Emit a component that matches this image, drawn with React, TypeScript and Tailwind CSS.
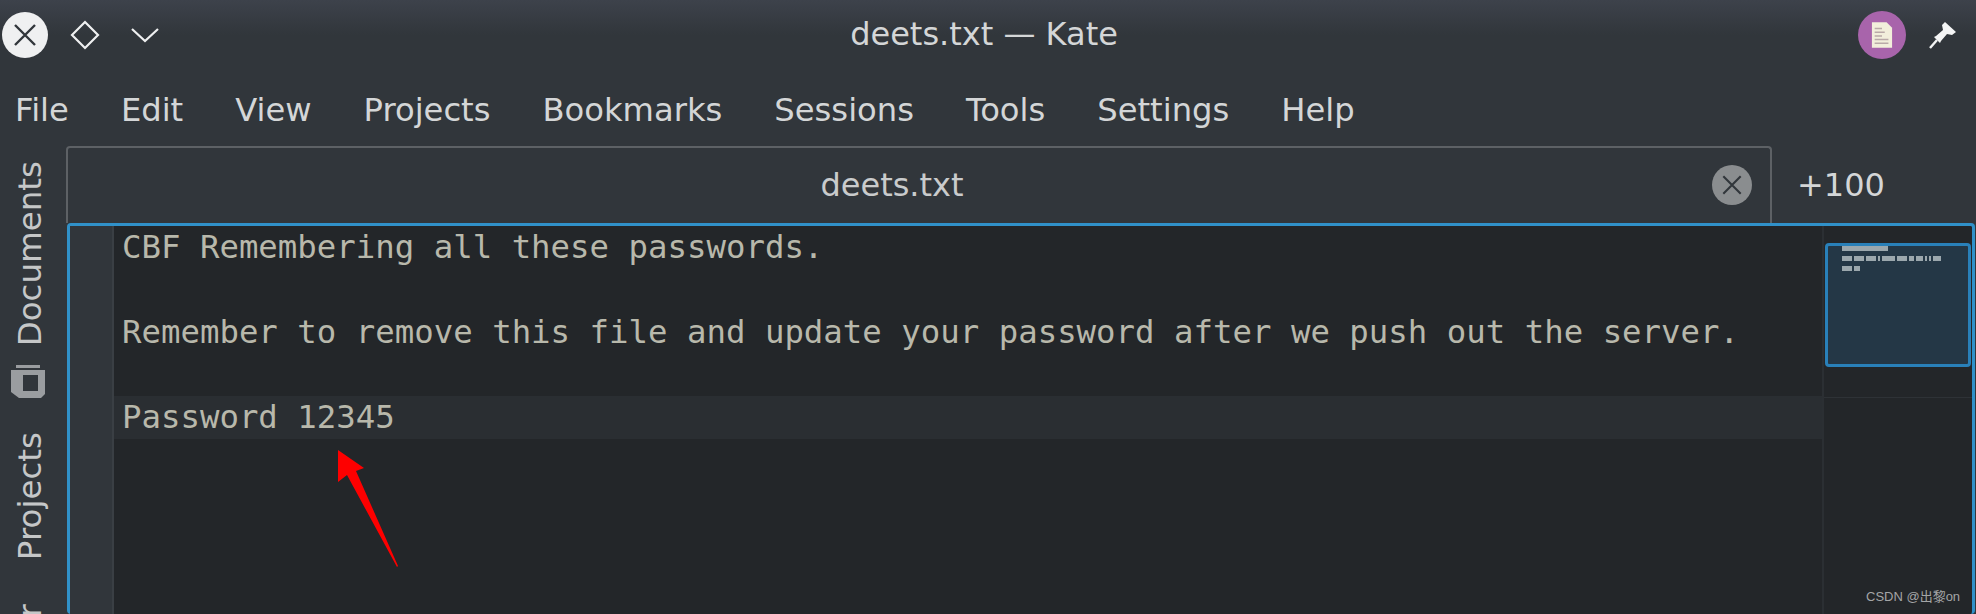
const menus = ["File", "Edit", "View", "Projects", "Bookmarks", "Sessions", "Tools", "Settings", "Help"];

const mono = { fontFamily: '"DejaVu Sans Mono", monospace' };

function CloseIcon({ className }: { className: string }) {
  return (
    <svg viewBox="0 0 46 46" className={className}>
      <path d="M13 13 33 33M33 13 13 33" stroke="#31363b" strokeWidth="2.4" fill="none" />
    </svg>
  );
}

function TitleBar() {
  return (
    <header className="relative flex h-[70px] items-center bg-gradient-to-b from-[#3d424b] to-[#31363b] to-50%">
      <div className="ml-[2px] flex h-[46px] w-[46px] items-center justify-center rounded-full bg-[#eff0f1]">
        <CloseIcon className="h-[46px] w-[46px]" />
      </div>
      <svg viewBox="0 0 30 30" className="ml-[22px] h-[30px] w-[30px]">
        <path d="M15 2 28 15 15 28 2 15Z" stroke="#eff0f1" strokeWidth="2.2" fill="none" />
      </svg>
      <svg viewBox="0 0 30 18" className="ml-[30px] h-[18px] w-[30px]">
        <path d="M2 3 15 15 28 3" stroke="#eff0f1" strokeWidth="2.2" fill="none" />
      </svg>
      <div className="flex-1 pr-[50px] pb-[2px] text-center text-[32px] text-[#d4d6d7]">deets.txt — Kate</div>
      <div className="mr-[22px] flex h-[48px] w-[48px] items-center justify-center rounded-full bg-[#a864ab]">
        <svg viewBox="0 0 24 30" className="h-[28px] w-[22px]">
          <path d="M1 1H17L23 7V29H1Z" fill="#f2eedb" />
          <path d="M4 8H12M4 12H15M4 16H12M4 20H19M4 24H19" stroke="#b9a9a8" strokeWidth="1.6" />
        </svg>
      </div>
      <svg viewBox="0 0 30 30" className="mr-[18px] h-[30px] w-[30px]">
        <path d="M17 2 28 12 24 15 19 14 13 21 12 23 6 17 8 16 15 10 14 5Z" fill="#f4f5f5" />
        <path d="M9 20 2 28" stroke="#f4f5f5" strokeWidth="2.4" />
      </svg>
    </header>
  );
}

function MenuBar() {
  return (
    <nav className="flex h-[76px] items-center gap-[52px] pt-[4px] pl-[15px] text-[32.2px] text-[#d4d6d7]">
      {menus.map((m) => (
        <span key={m}>{m}</span>
      ))}
    </nav>
  );
}

function SideBar() {
  return (
    <aside className="flex h-[468px] w-[66px] flex-col items-center overflow-hidden pr-[6px] text-[32.5px] leading-[40px] text-[#c5c7c8]">
      <span className="mt-[15px] shrink-0 rotate-180 [writing-mode:vertical-rl]">Documents</span>
      <svg viewBox="0 0 36 36" className="mt-[17px] mr-[4px] h-[36px] w-[36px] shrink-0">
        <path d="M6 2H30V5H6Z" fill="#9a9da0" />
        <path fillRule="evenodd" d="M1 7H35V31L31 35H9L1 29ZM13 12V28H28V12Z" fill="#9a9da0" />
      </svg>
      <span className="mt-[33px] shrink-0 rotate-180 [writing-mode:vertical-rl]">Projects</span>
      <span className="mt-[44px] shrink-0 rotate-180 [writing-mode:vertical-rl]">Filesystem Browser</span>
    </aside>
  );
}

function TabRow() {
  return (
    <div className="flex h-[77px] items-stretch">
      <div className="flex w-[1706px] items-center rounded-t-[4px] border-x-2 border-t-2 border-[#5d6165] pb-[2px]">
        <span className="flex-1 pl-[4px] text-center text-[32px] text-[#c9cbcc]">deets.txt</span>
        <div className="mr-[18px] flex h-[40px] w-[40px] items-center justify-center rounded-full bg-[#8a8d8f]">
          <CloseIcon className="h-[40px] w-[40px]" />
        </div>
      </div>
      <span className="ml-[25px] self-center text-[32px] text-[#d4d6d7]">+100</span>
    </div>
  );
}

function Minimap() {
  return (
    <div className="flex w-[150px] flex-col border-l-2 border-[#2b2f33]">
      <div className="mx-[1px] mt-[17px] h-[124px] rounded-[4px] border-[3px] border-[#2980b9] bg-[#243746] pl-[14px]">
        <div className="h-[5px] w-[46px] bg-[#9ba7ad]" />
        <div className="mt-[5px] flex gap-[2px]">
          {[10, 10, 10, 2, 13, 10, 5, 7, 2, 2, 8].map((w, i) => (
            <div key={i} className="h-[5px] bg-[#9ba7ad]" style={{ width: w }} />
          ))}
        </div>
        <div className="mt-[5px] flex gap-[2px]">
          <div className="h-[5px] w-[10px] bg-[#9ba7ad]" />
          <div className="h-[5px] w-[6px] bg-[#9ba7ad]" />
        </div>
      </div>
      <div className="mt-[30px] h-px bg-[#2e3236]" />
    </div>
  );
}

function Editor() {
  return (
    <div className="flex h-[391px] rounded-[4px] border-[3px] border-b-0 border-[#3091c9] bg-[#232629]">
      <div className="w-[44px] shrink-0 border-r-2 border-[#3a3f44] bg-[#31363b]" />
      <div className="min-w-0 flex-1 text-[32.36px] leading-[42.5px] whitespace-pre text-[#b8b8ab]" style={mono}>
        <div className="pl-[8px]">CBF Remembering all these passwords.</div>
        <div className="pl-[8px]"> </div>
        <div className="pl-[8px]">Remember to remove this file and update your password after we push out the server.</div>
        <div className="pl-[8px]"> </div>
        <div className="bg-[#2a2e32] pl-[8px]">Password 12345</div>
      </div>
      <Minimap />
    </div>
  );
}

export default function App() {
  return (
    <div
      className="relative h-[614px] w-[1976px] overflow-hidden bg-[#31363b]"
      style={{ fontFamily: '"DejaVu Sans", sans-serif' }}
    >
      <TitleBar />
      <MenuBar />
      <div className="flex">
        <SideBar />
        <main className="mr-[1px] min-w-0 flex-1">
          <TabRow />
          <div className="ml-[1px]">
            <Editor />
          </div>
        </main>
      </div>
      <svg viewBox="0 0 1976 614" className="pointer-events-none absolute inset-0 h-[614px] w-[1976px]">
        <path d="M338 450 364 468 356 471 398 566 397 567 347 475 338 482Z" fill="#fe0000" />
      </svg>
      <span
        className="absolute top-[587px] left-[1866px] text-[13px] leading-[20px] whitespace-nowrap text-[#a3a5a6]"
        style={{ fontFamily: '"Liberation Sans", "Noto Sans CJK SC", sans-serif' }}
      >
        CSDN @出黎on
      </span>
    </div>
  );
}
